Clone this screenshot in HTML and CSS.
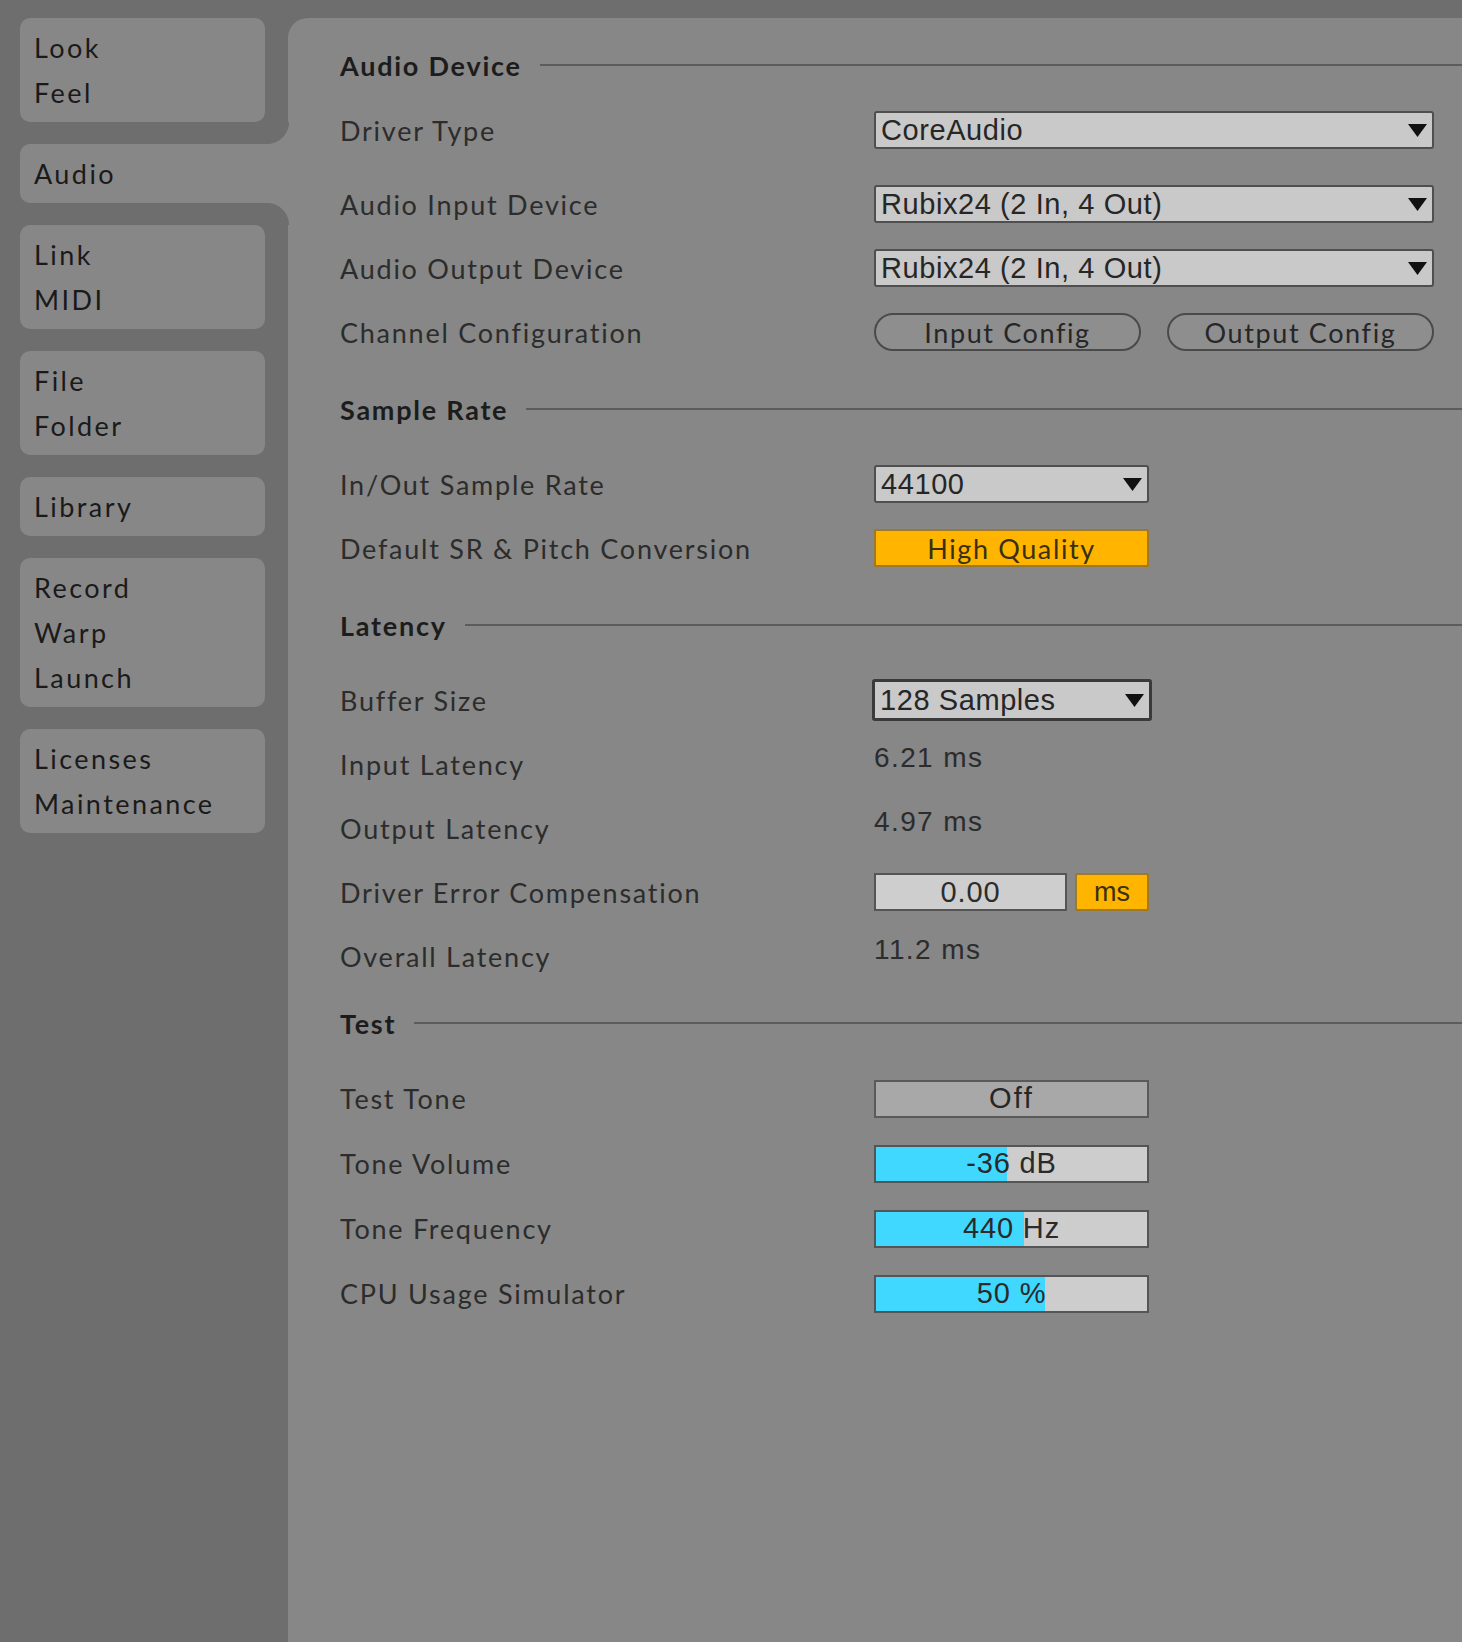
FILE: index.html
```html
<!DOCTYPE html>
<html lang="en">
<head>
<meta charset="utf-8">
<title>Preferences - Audio</title>
<link rel="stylesheet" href="styles.css">
</head>
<body>
<div class="app">
  <nav class="sidebar">
    <div class="tab"><div>Look</div><div>Feel</div></div>
    <div class="tab active"><div>Audio</div></div>
    <div class="tab"><div>Link</div><div>MIDI</div></div>
    <div class="tab"><div>File</div><div>Folder</div></div>
    <div class="tab"><div>Library</div></div>
    <div class="tab"><div>Record</div><div>Warp</div><div>Launch</div></div>
    <div class="tab"><div>Licenses</div><div>Maintenance</div></div>
  </nav>
  <main class="panel">
    <section class="section first">
      <div class="heading"><span>Audio Device</span><i class="rule"></i></div>
      <div class="row row-driver">
        <div class="label">Driver Type</div>
        <div class="dropdown wide"><span>CoreAudio</span><svg class="arrow" viewBox="0 0 19 13"><polygon points="0,0 19,0 9.5,13"/></svg></div>
      </div>
      <div class="row">
        <div class="label">Audio Input Device</div>
        <div class="dropdown wide"><span>Rubix24 (2 In, 4 Out)</span><svg class="arrow" viewBox="0 0 19 13"><polygon points="0,0 19,0 9.5,13"/></svg></div>
      </div>
      <div class="row">
        <div class="label">Audio Output Device</div>
        <div class="dropdown wide"><span>Rubix24 (2 In, 4 Out)</span><svg class="arrow" viewBox="0 0 19 13"><polygon points="0,0 19,0 9.5,13"/></svg></div>
      </div>
      <div class="row">
        <div class="label">Channel Configuration</div>
        <div class="pills">
          <div class="pill">Input Config</div>
          <div class="pill">Output Config</div>
        </div>
      </div>
    </section>

    <section class="section">
      <div class="heading"><span>Sample Rate</span><i class="rule"></i></div>
      <div class="row">
        <div class="label">In/Out Sample Rate</div>
        <div class="dropdown"><span>44100</span><svg class="arrow" viewBox="0 0 19 13"><polygon points="0,0 19,0 9.5,13"/></svg></div>
      </div>
      <div class="row">
        <div class="label">Default SR &amp; Pitch Conversion</div>
        <div class="toggle orange">High Quality</div>
      </div>
    </section>

    <section class="section">
      <div class="heading"><span>Latency</span><i class="rule"></i></div>
      <div class="row">
        <div class="label">Buffer Size</div>
        <div class="dropdown focused"><span>128 Samples</span><svg class="arrow" viewBox="0 0 19 13"><polygon points="0,0 19,0 9.5,13"/></svg></div>
      </div>
      <div class="row">
        <div class="label">Input Latency</div>
        <div class="value">6.21 ms</div>
      </div>
      <div class="row">
        <div class="label">Output Latency</div>
        <div class="value">4.97 ms</div>
      </div>
      <div class="row">
        <div class="label">Driver Error Compensation</div>
        <div class="compensation">
          <div class="numfield">0.00</div>
          <div class="unit">ms</div>
        </div>
      </div>
      <div class="row">
        <div class="label">Overall Latency</div>
        <div class="value">11.2 ms</div>
      </div>
    </section>

    <section class="section test">
      <div class="heading"><span>Test</span><i class="rule"></i></div>
      <div class="row">
        <div class="label">Test Tone</div>
        <div class="toggle off">Off</div>
      </div>
      <div class="row">
        <div class="label">Tone Volume</div>
        <div class="slider"><div class="fill" style="width:48.5%"></div><span>-36 dB</span></div>
      </div>
      <div class="row">
        <div class="label">Tone Frequency</div>
        <div class="slider"><div class="fill" style="width:54.5%"></div><span>440 Hz</span></div>
      </div>
      <div class="row">
        <div class="label">CPU Usage Simulator</div>
        <div class="slider"><div class="fill" style="width:62.5%"></div><span>50 %</span></div>
      </div>
    </section>
  </main>
</div>
</body>
</html>
```

FILE: styles.css
```css
* { box-sizing: border-box; }

html, body {
  margin: 0;
  height: 1642px;
  overflow: hidden;
}

body {
  background: #6e6e6e;
  font-family: Lato, "Open Sans", sans-serif;
  color: #2a2a2a;
}

.app {
  display: flex;
  padding-top: 18px;
  height: 1642px;
}

/* ---------- sidebar ---------- */
.sidebar {
  flex: none;
  width: 245px;
  margin-left: 20px;
  margin-right: 23px;
  display: flex;
  flex-direction: column;
  gap: 22px;
}

.tab {
  background: #878787;
  border-radius: 10px;
  padding: 7px 0 7px 14px;
  font-size: 27px;
  line-height: 45px;
  letter-spacing: 0.09em;
  color: #1a1a1a;
}

.tab.active {
  position: relative;
  margin-right: -24px;
  border-radius: 10px 0 0 10px;
}

.tab.active::before,
.tab.active::after {
  content: "";
  position: absolute;
  right: 0;
  width: 22px;
  height: 22px;
}

.tab.active::before {
  top: -22px;
  background: radial-gradient(circle at 0 0, #6e6e6e 21.5px, #878787 22.5px);
}

.tab.active::after {
  bottom: -22px;
  background: radial-gradient(circle at 0 100%, #6e6e6e 21.5px, #878787 22.5px);
}

/* ---------- panel ---------- */
.panel {
  flex: 1;
  background: #878787;
  border-top-left-radius: 20px;
  padding: 22px 0 0 52px;
  min-width: 0;
}

.section { margin-top: 20px; }
.section.first { margin-top: 0; }
.section.test { margin-top: 10px; }

.heading {
  display: flex;
  align-items: center;
  gap: 18px;
  height: 50px;
  margin-bottom: 18px;
  font-size: 27px;
  font-weight: 700;
  letter-spacing: 0.065em;
  color: #1c1c1c;
  white-space: nowrap;
}

.section.first .heading { margin-bottom: 8px; }

.rule {
  flex: 1;
  height: 2px;
  background: #5c5c5c;
}

.row {
  display: flex;
  align-items: center;
  height: 64px;
}

.section.test .row { height: 65px; }

.row-driver { margin-bottom: 10px; }

.label {
  flex: none;
  width: 534px;
  font-size: 27px;
  letter-spacing: 0.065em;
  color: #2c2c2c;
  white-space: nowrap;
}

/* ---------- controls ---------- */
.dropdown {
  display: flex;
  align-items: center;
  justify-content: space-between;
  width: 275px;
  height: 38px;
  padding: 0 5px 0 5px;
  background: #c9c9c9;
  border: 2px solid #4f4f4f;
  border-radius: 3px;
  font-family: "Liberation Sans", Arial, sans-serif;
  font-size: 29px;
  letter-spacing: 0.02em;
  color: #262626;
  white-space: nowrap;
}

.dropdown.wide { width: 560px; }

.dropdown.focused {
  width: 280px;
  height: 42px;
  margin-left: -2px;
  border: 3px solid #3a3a3a;
}

.arrow {
  width: 19px;
  height: 13px;
  fill: #111;
  flex: none;
}

.pills {
  display: flex;
  gap: 26px;
}

.pill {
  width: 267px;
  height: 38px;
  border: 2px solid #4a4a4a;
  border-radius: 19px;
  background: #8e8e8e;
  display: flex;
  align-items: center;
  justify-content: center;
  font-size: 27px;
  letter-spacing: 0.06em;
  color: #262626;
}

.toggle {
  width: 275px;
  height: 38px;
  display: flex;
  align-items: center;
  justify-content: center;
  font-size: 27px;
  letter-spacing: 0.06em;
  color: #262626;
}

.toggle.orange {
  background: #ffb400;
  border: 2px solid #9c7a2a;
  color: #3a2f10;
}

.toggle.off {
  background: #a8a8a8;
  border: 2px solid #5a5a5a;
  font-family: "Liberation Sans", Arial, sans-serif;
  font-size: 29px;
  letter-spacing: 0.08em;
}

.value {
  margin-bottom: 12px;
  font-family: "Liberation Sans", Arial, sans-serif;
  font-size: 28px;
  letter-spacing: 0.05em;
  color: #2c2c2c;
}

.compensation {
  display: flex;
  gap: 8px;
}

.numfield,
.unit {
  height: 38px;
  display: flex;
  align-items: center;
  justify-content: center;
  font-family: "Liberation Sans", Arial, sans-serif;
  font-size: 29px;
}

.numfield {
  width: 193px;
  background: #cecece;
  border: 2px solid #555;
  color: #2c2c2c;
  letter-spacing: 0.03em;
}

.unit {
  width: 74px;
  background: #ffb400;
  border: 2px solid #9c7a2a;
  color: #3a2f10;
  font-size: 27px;
}

.slider {
  position: relative;
  width: 275px;
  height: 38px;
  background: #cdcdcd;
  border: 2px solid #555;
  display: flex;
  align-items: center;
  justify-content: center;
  font-family: "Liberation Sans", Arial, sans-serif;
  font-size: 29px;
  letter-spacing: 0.03em;
  color: #2a2a2a;
  overflow: hidden;
}

.slider .fill {
  position: absolute;
  left: 0;
  top: 0;
  bottom: 0;
  background: #40d8ff;
}

.slider span { position: relative; }
```
